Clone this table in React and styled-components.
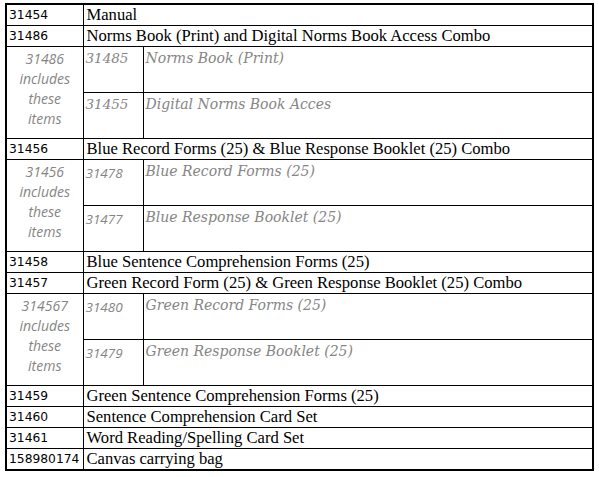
import React from "react";
import styled, { createGlobalStyle } from "styled-components";

const Global = createGlobalStyle`
  html, body { margin: 0; padding: 0; background: #fff; }
  body { padding: 3px 0 0 5px; }
`;

const Table = styled.table`
  border-collapse: collapse;
  width: 589px;
  table-layout: fixed;
  border: 2px solid #000;
`;

const Row = styled.tr`
  height: ${(p) => p.$h}px;
`;

const Cell = styled.td`
  border: 1px solid #000;
  padding: 0 2px;
  vertical-align: middle;
  white-space: nowrap;
  overflow: hidden;
`;

const Code = styled(Cell)`
  font-family: "DejaVu Sans", sans-serif;
  font-size: 12.3px;
  color: #000;
`;

const Desc = styled(Cell)`
  font-family: "Liberation Serif", serif;
  font-size: 16.6px;
  color: #000;
  padding-left: 3px;
`;

const Includes = styled(Cell)`
  font-family: "Open Sans", sans-serif;
  font-style: italic;
  font-size: 14px;
  line-height: 20px;
  color: #858585;
  text-align: center;
  vertical-align: top;
  white-space: normal;
  padding-top: 2px;
`;

const SubCode = styled(Cell)`
  font-family: ${(p) => (p.$serif ? '"DejaVu Serif", serif' : '"Open Sans", sans-serif')};
  font-style: italic;
  font-size: ${(p) => (p.$serif ? "13.5px" : "13.5px")};
  color: #858585;
  vertical-align: top;
  padding-top: ${(p) => (p.$serif ? "3px" : "4px")};
`;

const SubDesc = styled(Cell)`
  font-family: "DejaVu Serif", serif;
  font-style: italic;
  font-size: 14px;
  color: #858585;
  vertical-align: top;
  padding-top: 3px;
`;

const rows = [
  { code: "31454", desc: "Manual" },
  {
    code: "31486",
    desc: "Norms Book (Print) and Digital Norms Book Access Combo",
    group: {
      label: "31486 includes these items",
      serif: true,
      items: [
        ["31485", "Norms Book (Print)"],
        ["31455", "Digital Norms Book Acces"],
      ],
    },
  },
  {
    code: "31456",
    desc: "Blue Record Forms (25) & Blue Response Booklet (25) Combo",
    group: {
      label: "31456 includes these items",
      items: [
        ["31478", "Blue Record Forms (25)"],
        ["31477", "Blue Response Booklet (25)"],
      ],
    },
  },
  { code: "31458", desc: "Blue Sentence Comprehension Forms (25)" },
  {
    code: "31457",
    desc: "Green Record Form (25) & Green Response Booklet (25) Combo",
    group: {
      label: "314567 includes these items",
      items: [
        ["31480", "Green Record Forms (25)"],
        ["31479", "Green Response Booklet (25)"],
      ],
    },
  },
  { code: "31459", desc: "Green Sentence Comprehension Forms (25)" },
  { code: "31460", desc: "Sentence Comprehension Card Set" },
  { code: "31461", desc: "Word Reading/Spelling Card Set" },
  { code: "158980174", desc: "Canvas carrying bag" },
];

export default function App() {
  return (
    <>
      <Global />
      <Table>
        <colgroup>
          <col style={{ width: 77 }} />
          <col style={{ width: 60 }} />
          <col />
        </colgroup>
        <tbody>
          {rows.map((r) => (
            <React.Fragment key={r.code}>
              <Row $h={21}>
                <Code>{r.code}</Code>
                <Desc colSpan={2}>{r.desc}</Desc>
              </Row>
              {r.group &&
                r.group.items.map(([c, d], i) => (
                  <Row $h={46} key={c}>
                    {i === 0 && (
                      <Includes rowSpan={2}>
                        {r.group.label.split(" ").map((w, k) => (
                          <div key={k}>{w}</div>
                        ))}
                      </Includes>
                    )}
                    <SubCode $serif={r.group.serif}>{c}</SubCode>
                    <SubDesc>{d}</SubDesc>
                  </Row>
                ))}
            </React.Fragment>
          ))}
        </tbody>
      </Table>
    </>
  );
}
